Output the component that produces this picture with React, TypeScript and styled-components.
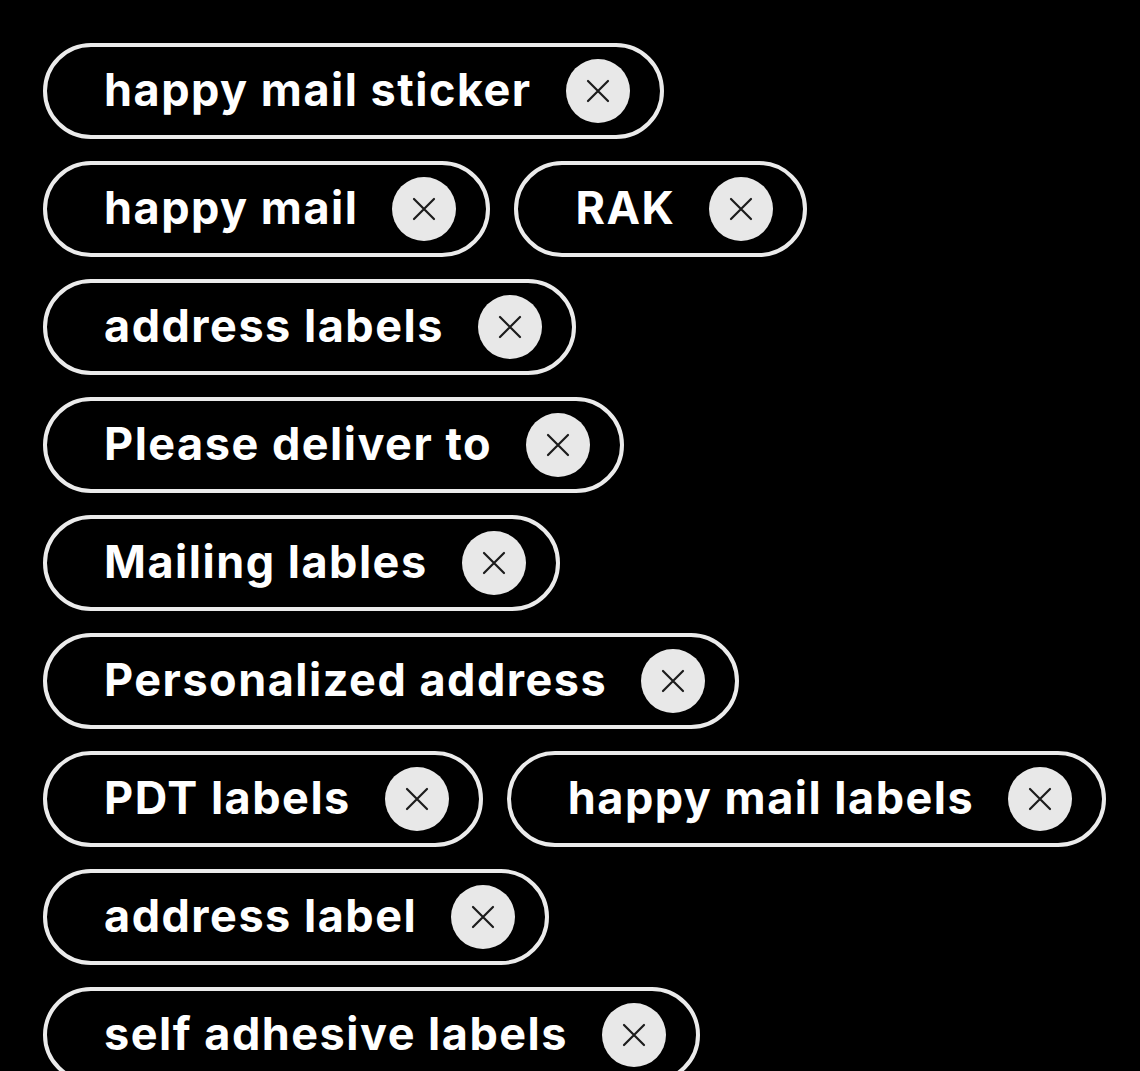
import React from 'react';
import styled, { createGlobalStyle } from 'styled-components';

const GlobalStyle = createGlobalStyle`
  html, body {
    margin: 0;
    padding: 0;
    background: #000;
  }
`;

const rows: string[][] = [
  ['happy mail sticker'],
  ['happy mail', 'RAK'],
  ['address labels'],
  ['Please deliver to'],
  ['Mailing lables'],
  ['Personalized address'],
  ['PDT labels', 'happy mail labels'],
  ['address label'],
  ['self adhesive labels'],
];

const Page = styled.div`
  display: flex;
  flex-direction: column;
  gap: 22px;
  padding: 43px 0 0 43px;
  height: 1071px;
  box-sizing: border-box;
  overflow: hidden;
  background: #000;
`;

const Row = styled.div`
  display: flex;
  gap: 24px;
`;

const Chip = styled.div`
  display: inline-flex;
  align-items: center;
  gap: 34px;
  height: 96px;
  box-sizing: border-box;
  padding: 0 30px 0 57px;
  border: 4px solid #ebebeb;
  border-radius: 48px;
  flex-shrink: 0;
`;

const Label = styled.span`
  font-family: Inter, "Liberation Sans", sans-serif;
  font-weight: 700;
  font-size: 45px;
  letter-spacing: 1.5px;
  line-height: 1;
  color: #fff;
  white-space: nowrap;
  padding-bottom: 3px;
`;

const RemoveButton = styled.button`
  width: 64px;
  height: 64px;
  border-radius: 50%;
  border: none;
  padding: 0;
  background: #e8e8e8;
  display: flex;
  align-items: center;
  justify-content: center;
  cursor: pointer;
  flex-shrink: 0;
`;

const CloseIcon = () => (
  <svg width="24" height="24" viewBox="0 0 24 24" fill="none">
    <path d="M2 2 L22 22 M22 2 L2 22" stroke="#1c1c1c" strokeWidth="2.2" strokeLinecap="round" />
  </svg>
);

const App = () => {
  return (
    <>
      <GlobalStyle />
      <Page>
        {rows.map((row, i) => (
          <Row key={i}>
            {row.map((tag) => (
              <Chip key={tag}>
                <Label>{tag}</Label>
                <RemoveButton aria-label={`Remove ${tag}`}>
                  <CloseIcon />
                </RemoveButton>
              </Chip>
            ))}
          </Row>
        ))}
      </Page>
    </>
  );
};

export default App;
